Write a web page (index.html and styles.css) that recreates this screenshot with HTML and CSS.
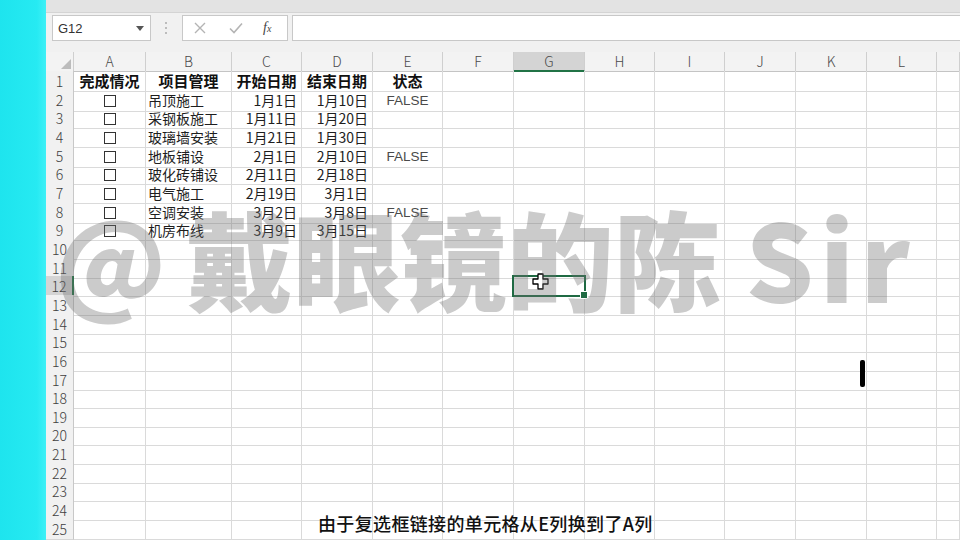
FILE: index.html
```html
<!DOCTYPE html>
<html lang="zh-CN">
<head>
<meta charset="utf-8">
<title>Excel</title>
<link rel="stylesheet" href="styles.css">
</head>
<body>
<div class="stage">
  <div class="strip"></div>
  <div class="excel">
    <div class="topband"></div>
    <div class="fbar">
      <div class="namebox"><span class="ref">G12</span><svg class="dd" width="8" height="5" viewBox="0 0 8 5"><path d="M0 0H8L4 5Z" fill="#555"/></svg></div>
      <div class="grip"><svg width="4" height="14" viewBox="0 0 4 14"><circle cx="2" cy="2" r="1" fill="#aaa"/><circle cx="2" cy="7" r="1" fill="#aaa"/><circle cx="2" cy="12" r="1" fill="#aaa"/></svg></div>
      <div class="fxbox">
        <svg class="ico" width="12" height="12" viewBox="0 0 12 12"><path d="M1 1L11 11M11 1L1 11" stroke="#b4b4b4" stroke-width="1.4"/></svg>
        <svg class="ico" width="14" height="12" viewBox="0 0 14 12"><path d="M1 6.5L5 10.5L13 1.5" stroke="#b4b4b4" stroke-width="1.6" fill="none"/></svg>
        <span class="fx">f<span class="fxs">x</span></span>
      </div>
      <div class="finput"></div>
    </div>
    <div class="sheet">
      <div class="r hdr"><span class="corner"><svg width="10" height="10" viewBox="0 0 10 10"><path d="M10 0V10H0Z" fill="#bcbcbc"/></svg></span><span>A</span><span>B</span><span>C</span><span>D</span><span>E</span><span>F</span><span class="csel">G</span><span>H</span><span>I</span><span>J</span><span>K</span><span>L</span><span></span></div>
      <div class="r"><span class="rh">1</span><span class="bo">完成情况</span><span class="bo">项目管理</span><span class="bo">开始日期</span><span class="bo">结束日期</span><span class="bo">状态</span><i></i><i></i><i></i><i></i><i></i><i></i><i></i><i></i></div>
      <div class="r"><span class="rh">2</span><span class="ck"><span class="cb"></span></span><span class="tx">吊顶施工</span><span class="num">1月1日</span><span class="num">1月10日</span><span class="bool">FALSE</span><i></i><i></i><i></i><i></i><i></i><i></i><i></i><i></i></div>
      <div class="r"><span class="rh">3</span><span class="ck"><span class="cb"></span></span><span class="tx">采钢板施工</span><span class="num">1月11日</span><span class="num">1月20日</span><i></i><i></i><i></i><i></i><i></i><i></i><i></i><i></i><i></i></div>
      <div class="r"><span class="rh">4</span><span class="ck"><span class="cb"></span></span><span class="tx">玻璃墙安装</span><span class="num">1月21日</span><span class="num">1月30日</span><i></i><i></i><i></i><i></i><i></i><i></i><i></i><i></i><i></i></div>
      <div class="r"><span class="rh">5</span><span class="ck"><span class="cb"></span></span><span class="tx">地板铺设</span><span class="num">2月1日</span><span class="num">2月10日</span><span class="bool">FALSE</span><i></i><i></i><i></i><i></i><i></i><i></i><i></i><i></i></div>
      <div class="r"><span class="rh">6</span><span class="ck"><span class="cb"></span></span><span class="tx">玻化砖铺设</span><span class="num">2月11日</span><span class="num">2月18日</span><i></i><i></i><i></i><i></i><i></i><i></i><i></i><i></i><i></i></div>
      <div class="r"><span class="rh">7</span><span class="ck"><span class="cb"></span></span><span class="tx">电气施工</span><span class="num">2月19日</span><span class="num">3月1日</span><i></i><i></i><i></i><i></i><i></i><i></i><i></i><i></i><i></i></div>
      <div class="r"><span class="rh">8</span><span class="ck"><span class="cb"></span></span><span class="tx">空调安装</span><span class="num">3月2日</span><span class="num">3月8日</span><span class="bool">FALSE</span><i></i><i></i><i></i><i></i><i></i><i></i><i></i><i></i></div>
      <div class="r"><span class="rh">9</span><span class="ck"><span class="cb"></span></span><span class="tx">机房布线</span><span class="num">3月9日</span><span class="num">3月15日</span><i></i><i></i><i></i><i></i><i></i><i></i><i></i><i></i><i></i></div>
      <div class="r"><span class="rh">10</span><i></i><i></i><i></i><i></i><i></i><i></i><i></i><i></i><i></i><i></i><i></i><i></i><i></i></div>
      <div class="r"><span class="rh">11</span><i></i><i></i><i></i><i></i><i></i><i></i><i></i><i></i><i></i><i></i><i></i><i></i><i></i></div>
      <div class="r"><span class="rh rsel">12</span><i></i><i></i><i></i><i></i><i></i><i></i><i></i><i></i><i></i><i></i><i></i><i></i><i></i></div>
      <div class="r"><span class="rh">13</span><i></i><i></i><i></i><i></i><i></i><i></i><i></i><i></i><i></i><i></i><i></i><i></i><i></i></div>
      <div class="r"><span class="rh">14</span><i></i><i></i><i></i><i></i><i></i><i></i><i></i><i></i><i></i><i></i><i></i><i></i><i></i></div>
      <div class="r"><span class="rh">15</span><i></i><i></i><i></i><i></i><i></i><i></i><i></i><i></i><i></i><i></i><i></i><i></i><i></i></div>
      <div class="r"><span class="rh">16</span><i></i><i></i><i></i><i></i><i></i><i></i><i></i><i></i><i></i><i></i><i></i><i></i><i></i></div>
      <div class="r"><span class="rh">17</span><i></i><i></i><i></i><i></i><i></i><i></i><i></i><i></i><i></i><i></i><i></i><i></i><i></i></div>
      <div class="r"><span class="rh">18</span><i></i><i></i><i></i><i></i><i></i><i></i><i></i><i></i><i></i><i></i><i></i><i></i><i></i></div>
      <div class="r"><span class="rh">19</span><i></i><i></i><i></i><i></i><i></i><i></i><i></i><i></i><i></i><i></i><i></i><i></i><i></i></div>
      <div class="r"><span class="rh">20</span><i></i><i></i><i></i><i></i><i></i><i></i><i></i><i></i><i></i><i></i><i></i><i></i><i></i></div>
      <div class="r"><span class="rh">21</span><i></i><i></i><i></i><i></i><i></i><i></i><i></i><i></i><i></i><i></i><i></i><i></i><i></i></div>
      <div class="r"><span class="rh">22</span><i></i><i></i><i></i><i></i><i></i><i></i><i></i><i></i><i></i><i></i><i></i><i></i><i></i></div>
      <div class="r"><span class="rh">23</span><i></i><i></i><i></i><i></i><i></i><i></i><i></i><i></i><i></i><i></i><i></i><i></i><i></i></div>
      <div class="r"><span class="rh">24</span><i></i><i></i><i></i><i></i><i></i><i></i><i></i><i></i><i></i><i></i><i></i><i></i><i></i></div>
      <div class="r"><span class="rh">25</span><i></i><i></i><i></i><i></i><i></i><i></i><i></i><i></i><i></i><i></i><i></i><i></i><i></i></div>
    </div>
  </div>
  <div class="selbox"><span class="handle"></span></div>
  <svg class="pluscur" width="17" height="17" viewBox="0 0 17 17"><path d="M6 1H11V6H16V11H11V16H6V11H1V6H6Z" fill="#fff" stroke="#000" stroke-width="1.3" stroke-linejoin="round"/></svg>
  <div class="watermark">@ 戴眼镜的陈 <span class="wm-latin">Sir</span></div>
  <div class="ibeam"></div>
  <div class="subtitle">由于复选框链接的单元格从E列换到了A列</div>
</div>
</body>
</html>
```
FILE: styles.css
```css
html, body {
  margin: 0;
  padding: 0;
}
body {
  width: 960px;
  height: 540px;
  overflow: hidden;
  background: #fff;
  font-family: "Noto Sans CJK SC", "Liberation Sans", sans-serif;
}
.stage {
  position: relative;
  display: flex;
  width: 960px;
  height: 540px;
  overflow: hidden;
}
.strip {
  width: 46px;
  flex: none;
  background: linear-gradient(90deg, #1ee4ee 0%, #26eaf2 80%, #3ff0f6 100%);
}
.excel {
  width: 914px;
  flex: none;
  display: flex;
  flex-direction: column;
  background: #fff;
}
.topband {
  height: 12px;
  background: #e3e3e3;
  border-bottom: 1px solid #d4d4d4;
}
.fbar {
  height: 39px;
  box-sizing: border-box;
  background: #f1f1f1;
  display: flex;
  align-items: flex-start;
  padding: 2px 0 0 6px;
}
.namebox {
  width: 99px;
  height: 26px;
  box-sizing: border-box;
  background: #fff;
  border: 1px solid #c8c8c8;
  display: flex;
  align-items: center;
  justify-content: space-between;
  padding: 0 6px 0 5px;
}
.ref {
  font-family: "Liberation Sans", sans-serif;
  font-size: 13px;
  color: #333;
}
.grip {
  width: 10px;
  margin-left: 10px;
  height: 26px;
  display: flex;
  align-items: center;
  justify-content: center;
}
.fxbox {
  width: 106px;
  height: 26px;
  margin-left: 11px;
  box-sizing: border-box;
  background: #fff;
  border: 1px solid #c8c8c8;
  display: flex;
  align-items: center;
  padding-left: 11px;
}
.fxbox .ico:first-child { margin-right: 23px; }
.fxbox .ico + .ico { margin-right: 20px; }
.fx {
  font-family: "Liberation Serif", serif;
  font-style: italic;
  font-size: 14px;
  color: #444;
}
.fxs {
  font-size: 10px;
}
.finput {
  flex: 1;
  height: 26px;
  margin-left: 4px;
  box-sizing: border-box;
  background: #fff;
  border: 1px solid #c8c8c8;
  border-right: none;
}
.sheet {
  display: flex;
  flex-direction: column;
}
.r {
  display: grid;
  grid-template-columns: 28px 72px 86px 70px 71px 70px 71px 71px 70px 70px 71px 71px 70px 23px;
  height: 18.67px;
}
.r > * {
  box-sizing: border-box;
  border-right: 1px solid #dadada;
  border-bottom: 1px solid #dadada;
  font-style: normal;
  font-size: 14px;
  line-height: 20px;
  color: #1e1e1e;
  white-space: nowrap;
  overflow: visible;
  min-width: 0;
}
.hdr {
  height: 19px;
  background: #f3f3f3;
}
.hdr > * {
  text-align: center;
  color: #4a4a4a;
  font-weight: 300;
  font-size: 14px;
  line-height: 18px;
  border-color: #cfcfcf;
  border-bottom-color: #c4c4c4;
}
.hdr > .corner {
  display: flex;
  align-items: flex-end;
  justify-content: flex-end;
  padding: 0 2px 2px 0;
}
.hdr > .csel {
  background: #d4d4d4;
  border-bottom: 2px solid #217346;
}
.r > .rh {
  background: #f1f1f1;
  text-align: center;
  color: #404040;
  font-weight: 300;
  border-right-color: #c8c8c8;
  border-bottom-color: #d6d6d6;
}
.r > .rsel {
  background: #d4d4d4;
  border-right: 2px solid #217346;
}
.r > .bo {
  font-weight: 700;
  font-size: 15px;
  text-align: center;
  color: #111;
}
.r > .tx {
  padding-left: 2px;
}
.r > .num {
  text-align: right;
  padding-right: 4px;
}
.r > .bool {
  text-align: center;
  font-family: "Liberation Sans", sans-serif;
  font-size: 13.5px;
  line-height: 21px;
  color: #4a4a4a;
}
.r > .ck {
  display: flex;
  align-items: center;
  justify-content: center;
  padding-top: 2px;
}
.cb {
  width: 12px;
  height: 12px;
  box-sizing: border-box;
  border: 1px solid #333;
}
.selbox {
  position: absolute;
  left: 512px;
  top: 275px;
  width: 74px;
  height: 22px;
  box-sizing: border-box;
  border: 2px solid #1f6a43;
}
.handle {
  position: absolute;
  right: -4px;
  bottom: -4px;
  width: 6px;
  height: 6px;
  background: #1f6a43;
  border: 1px solid #fff;
}
.pluscur {
  position: absolute;
  left: 532px;
  top: 273px;
}
.watermark {
  position: absolute;
  left: 55px;
  top: 203px;
  font-family: "Noto Sans CJK SC", sans-serif;
  font-weight: 900;
  font-size: 107px;
  line-height: 107px;
  word-spacing: -5px;
  color: rgba(110, 110, 110, 0.36);
  white-space: nowrap;
  pointer-events: none;
}
.wm-latin {
  display: inline-block;
  margin-left: 5px;
  letter-spacing: 6px;
}
.ibeam {
  position: absolute;
  left: 860px;
  top: 360px;
  width: 5px;
  height: 27px;
  border-radius: 2px;
  background: #000;
}
.subtitle {
  position: absolute;
  left: 318px;
  top: 511px;
  font-family: "Noto Sans CJK SC", sans-serif;
  font-size: 18px;
  font-weight: 500;
  letter-spacing: 0.35px;
  line-height: 24px;
  color: #111;
  white-space: nowrap;
}
```
